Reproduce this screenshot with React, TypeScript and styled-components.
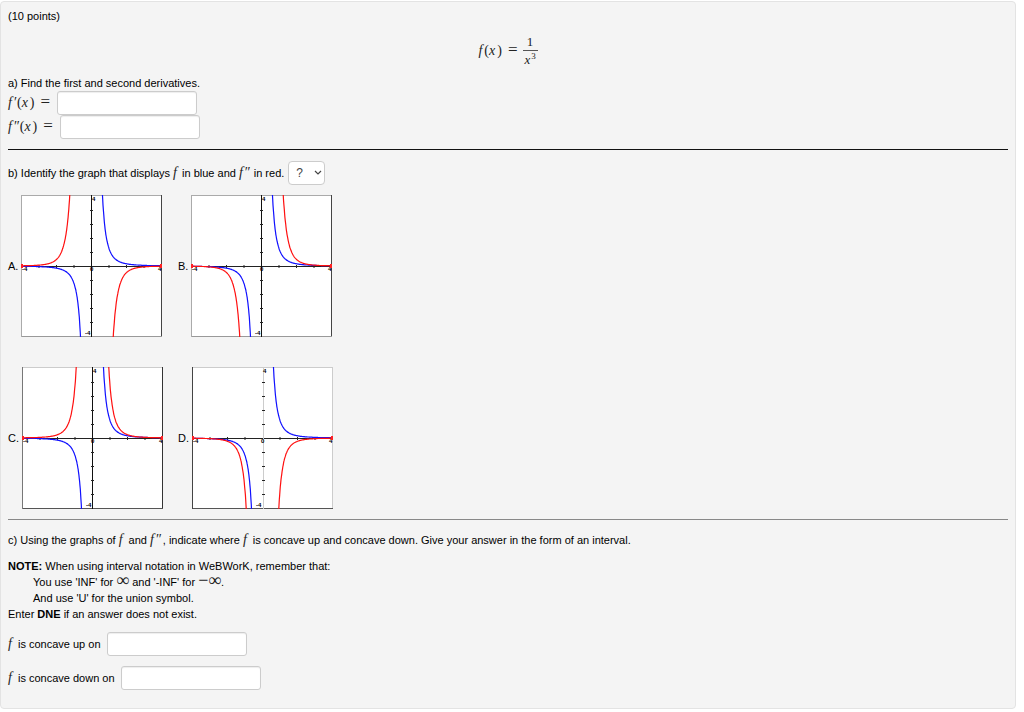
import React from "react";
import styled, { createGlobalStyle } from "styled-components";

const GlobalStyle = createGlobalStyle`
  *, *::before, *::after { box-sizing: border-box; }
  body {
    margin: 0;
    background: #fff;
    color: #000;
    font: 11px/16px "Liberation Sans", Arial, sans-serif;
  }
`;

const Panel = styled.main`
  margin: 1px 8px 0 0;
  padding: 6px 7px 18px;
  background: #f4f4f4;
  border: 1px solid #e3e3e3;
  border-radius: 4px;
`;

const Line = styled.p<{ $top?: number; $indent?: boolean }>`
  margin: ${(p) => p.$top ?? 0}px 0 0;
  padding-left: ${(p) => (p.$indent ? 25 : 0)}px;
`;

const Rule = styled.hr<{ $color: string }>`
  height: 1px;
  margin: 10px 0 0;
  border: 0;
  background: ${(p) => p.$color};
`;

const MathText = styled.span<{ $size?: number; $after?: number }>`
  margin-right: ${(p) => p.$after ?? 0}px;
  color: #222;
  font-family: "Liberation Serif", "Times New Roman", serif;
  font-size: ${(p) => p.$size ?? 14}px;
  line-height: 1px;
  white-space: nowrap;

  i {
    padding-right: 2px;
  }
`;

const Equals = styled.span`
  margin: 0 5px 0 6px;
  font-size: 17px;
`;

const Formula = styled.div`
  display: flex;
  justify-content: center;
  align-items: center;
  margin: 10px 0 9px;
`;

const Fraction = styled.span`
  display: flex;
  flex-direction: column;
  align-items: center;
  width: 15px;
  font-family: "Liberation Serif", "Times New Roman", serif;
  font-size: 13px;
  color: #222;
`;

const Numerator = styled.span`
  width: 100%;
  height: 17px;
  line-height: 16px;
  text-align: center;
  border-bottom: 1px solid #555;
`;

const Denominator = styled.span`
  height: 15px;
  line-height: 17px;

  sup {
    padding-left: 1px;
    font-size: 9px;
    line-height: 1px;
  }
`;

const FieldRow = styled.div<{ $top?: number; $gap: number }>`
  display: flex;
  align-items: center;
  gap: ${(p) => p.$gap}px;
  height: 24px;
  margin-top: ${(p) => p.$top ?? 0}px;
`;

const AnswerInput = styled.input`
  width: 140px;
  height: 24px;
  padding: 2px 5px;
  font: inherit;
  background: #fff;
  border: 1px solid #ccc;
  border-radius: 3px;
  box-shadow: inset 0 1px 1px #eee;
`;

const SelectBox = styled.span`
  position: relative;
  display: flex;

  svg {
    position: absolute;
    right: 3px;
    top: 9px;
    pointer-events: none;
  }
`;

const AnswerSelect = styled.select`
  appearance: none;
  width: 37px;
  height: 24px;
  padding: 0 14px 0 7px;
  font: inherit;
  font-size: 12px;
  color: #444;
  background: #fff;
  border: 1px solid #ccc;
  border-radius: 4px;
`;

const Graphs = styled.div`
  display: grid;
  grid-template-columns: repeat(2, 170px);
  row-gap: 30px;
  margin-top: 10px;
`;

const Choice = styled.figure`
  display: flex;
  align-items: center;
  gap: 3px;
  margin: 0;

  svg {
    display: block;
    flex: none;
  }
`;

type Curve = (x: number) => number;

const W = 141;
const H = 142;
const LIMIT = 4;
const TICKS = [-4, -3, -2, -1, 1, 2, 3, 4];

const px = (x: number) => 70.5 + (x / LIMIT) * 70;
const py = (y: number) => 71 - (y / LIMIT) * 70;

function branch(fn: Curve, side: 1 | -1) {
  const points: string[] = [];
  for (let i = 0; i <= 180; i++) {
    const x = side * (LIMIT - i * 0.02);
    const y = fn(x);
    if (Math.abs(y) > 4.3) break;
    points.push(`${px(x).toFixed(1)},${py(y).toFixed(1)}`);
  }
  return "M" + points.join("L");
}

const f: Curve = (x) => 1 / x ** 3;

interface GraphProps {
  label: string;
  red: Curve;
  /** Frame colours in the order top, right, bottom, left. */
  frame: [string, string, string, string];
  lightAxis?: boolean;
}

function Graph({ label, red, frame, lightAxis }: GraphProps) {
  const [top, right, bottom, left] = frame;
  const axis = lightAxis ? 71.5 : 70.5;
  return (
    <Choice>
      <figcaption>{label}.</figcaption>
      <svg width={W} height={H} viewBox={`0 0 ${W} ${H}`} role="img" aria-label={`Graph ${label}`}>
        <rect width={W} height={H} fill="#fff" />
        <path d={`M0 0.5H${W}`} stroke={top} />
        <path d={`M${W - 0.5} 0V${H}`} stroke={right} />
        <path d={`M0 ${H - 0.5}H${W}`} stroke={bottom} />
        <path d={`M0.5 0V${H}`} stroke={left} />
        <path d="M0 71.5H141" stroke="#222" />
        <path d={`M${axis} 0V142`} stroke={lightAxis ? "#ccc" : "#111"} />
        <g stroke="#222">
          {TICKS.map((t) => (
            <path key={`x${t}`} d={`M${70.5 + t * 17.5} 70V73`} />
          ))}
          {TICKS.map((t) => (
            <path key={`y${t}`} d={`M${axis - 1.5} ${71.5 + t * 14}h3`} />
          ))}
        </g>
        <g fontFamily="Liberation Sans, Arial, sans-serif" fontWeight="700" fontSize="6" fill="#000">
          <text x="1" y="76">-4</text>
          <text x="137" y="76">4</text>
          <text x="71" y="6">4</text>
          <text x="64" y="140">-4</text>
          <text x="69" y="76">0</text>
        </g>
        <g fill="none" strokeWidth="1.2">
          <path d={branch(f, -1)} stroke="#1010ff" />
          <path d={branch(f, 1)} stroke="#1010ff" />
          <path d={branch(red, -1)} stroke="#ff1010" />
          <path d={branch(red, 1)} stroke="#ff1010" />
        </g>
        <path d="M0 69h2v4h-2zM139 69h2v4h-2z" fill="#f22" />
      </svg>
    </Choice>
  );
}

export default function App() {
  return (
    <>
      <GlobalStyle />
      <Panel>
        <Line>(10 points)</Line>

        <Formula>
          <MathText><i>f</i>(<i>x</i>)<Equals>=</Equals></MathText>
          <Fraction>
            <Numerator>1</Numerator>
            <Denominator><i>x</i><sup>3</sup></Denominator>
          </Fraction>
        </Formula>

        <Line>a) Find the first and second derivatives.</Line>
        <FieldRow $gap={2}>
          <label htmlFor="first"><MathText><i>f</i>′(<i>x</i>)<Equals>=</Equals></MathText></label>
          <AnswerInput id="first" type="text" />
        </FieldRow>
        <FieldRow $gap={2}>
          <label htmlFor="second"><MathText><i>f</i>″(<i>x</i>)<Equals>=</Equals></MathText></label>
          <AnswerInput id="second" type="text" />
        </FieldRow>

        <Rule $color="#111" />

        <FieldRow $top={11} $gap={4}>
          <label htmlFor="graph">
            b) Identify the graph that displays <MathText><i>f</i></MathText> in blue and{" "}
            <MathText><i>f</i>″</MathText> in red.
          </label>
          <SelectBox>
            <AnswerSelect id="graph" defaultValue="?">
              <option>?</option>
              <option>A</option>
              <option>B</option>
              <option>C</option>
              <option>D</option>
            </AnswerSelect>
            <svg width="8" height="6" viewBox="0 0 8 6" fill="none" stroke="#444" strokeWidth="1.2">
              <path d="M1 1l3 3 3-3" />
            </svg>
          </SelectBox>
        </FieldRow>

        <Graphs>
          <Graph label="A" red={(x) => -12 / x ** 5} frame={["#aaa", "#444", "#999", "#aaa"]} />
          <Graph label="B" red={(x) => 12 / x ** 5} frame={["#aaa", "#444", "#999", "#aaa"]} />
          <Graph label="C" red={(x) => 3 / x ** 4} frame={["#ccc", "#333", "#555", "#777"]} />
          <Graph label="D" red={(x) => -3 / x ** 4} frame={["#ccc", "#ccc", "#555", "#444"]} lightAxis />
        </Graphs>

        <Rule $color="#888" />

        <Line $top={12}>
          c) Using the graphs of <MathText $after={1}><i>f</i></MathText> and{" "}
          <MathText $after={1}><i>f</i>″</MathText>, indicate where{" "}
          <MathText $after={1}><i>f</i></MathText> is concave up and concave down. Give your answer in the form of an
          interval.
        </Line>

        <Line $top={10}>
          <b>NOTE:</b> When using interval notation in WeBWorK, remember that:
        </Line>
        <Line $indent>
          You use 'INF' for <MathText $size={18}>∞</MathText> and '-INF' for <MathText $size={18}>−∞</MathText>.
        </Line>
        <Line $indent>And use 'U' for the union symbol.</Line>
        <Line>
          Enter <b>DNE</b> if an answer does not exist.
        </Line>

        <FieldRow $top={10} $gap={6}>
          <label htmlFor="up"><MathText $after={1}><i>f</i></MathText> is concave up on</label>
          <AnswerInput id="up" type="text" />
        </FieldRow>
        <FieldRow $top={10} $gap={6}>
          <label htmlFor="down"><MathText $after={1}><i>f</i></MathText> is concave down on</label>
          <AnswerInput id="down" type="text" />
        </FieldRow>
      </Panel>
    </>
  );
}
